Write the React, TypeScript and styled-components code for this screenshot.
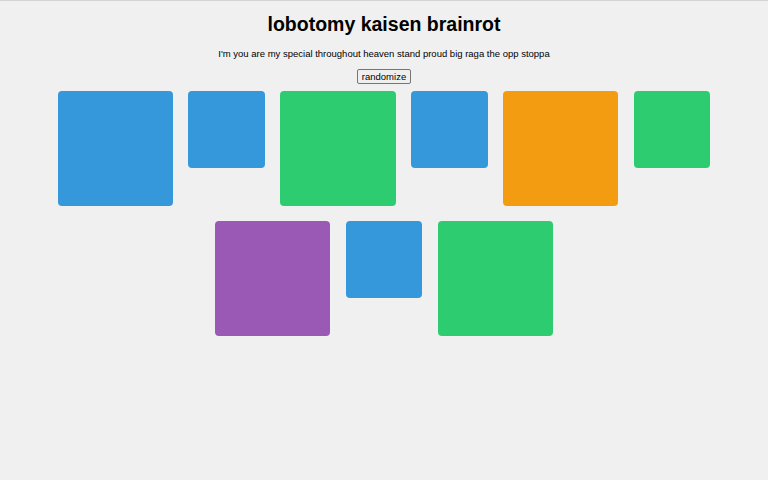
import styled, { createGlobalStyle } from 'styled-components';

const GlobalStyle = createGlobalStyle`
  html, body {
    margin: 0;
    padding: 0;
    background: #f0f0f0;
  }
  body {
    border-top: 1px solid #d4d4d4;
    font-family: "Liberation Sans", Arial, sans-serif;
    min-height: 479px;
  }
`;

const Page = styled.div`
  display: flex;
  flex-direction: column;
  align-items: center;
  padding-top: 11px;
`;

const Title = styled.h1`
  margin: 0;
  font-size: 19.5px;
  font-weight: 700;
  color: #000;
  line-height: 24px;
`;

const Subtitle = styled.p`
  margin: 12px 0 0;
  font-size: 9.5px;
  line-height: 12px;
  color: #000;
`;

const Button = styled.button`
  margin-top: 9px;
  font-family: "Liberation Sans", Arial, sans-serif;
  font-size: 9.5px;
  padding: 1px 4px;
  height: 15px;
  line-height: 11px;
  background: #efefef;
  border: 1px solid #767676;
  border-radius: 2px;
  color: #000;
`;

const Grid = styled.div`
  display: flex;
  flex-wrap: wrap;
  justify-content: center;
  align-items: flex-start;
  column-gap: 15.36px;
  row-gap: 15px;
  width: 680px;
  margin-top: 7px;
`;

const Square = styled.div<{ $size: number; $color: string }>`
  width: ${(p) => p.$size}px;
  height: ${(p) => p.$size}px;
  background: ${(p) => p.$color};
  border-radius: 4px;
`;

const BLUE = '#3498db';
const GREEN = '#2ecc71';
const ORANGE = '#f39c12';
const PURPLE = '#9b59b6';

const BIG = 115.2;
const SMALL = 76.8;

const squares = [
  { size: BIG, color: BLUE },
  { size: SMALL, color: BLUE },
  { size: BIG, color: GREEN },
  { size: SMALL, color: BLUE },
  { size: BIG, color: ORANGE },
  { size: SMALL, color: GREEN },
  { size: BIG, color: PURPLE },
  { size: SMALL, color: BLUE },
  { size: BIG, color: GREEN },
];

export default function App() {
  return (
    <>
      <GlobalStyle />
      <Page>
        <Title>lobotomy kaisen brainrot</Title>
        <Subtitle>I'm you are my special throughout heaven stand proud big raga the opp stoppa</Subtitle>
        <Button>randomize</Button>
        <Grid>
          {squares.map((s, i) => (
            <Square key={i} $size={s.size} $color={s.color} />
          ))}
        </Grid>
      </Page>
    </>
  );
}
